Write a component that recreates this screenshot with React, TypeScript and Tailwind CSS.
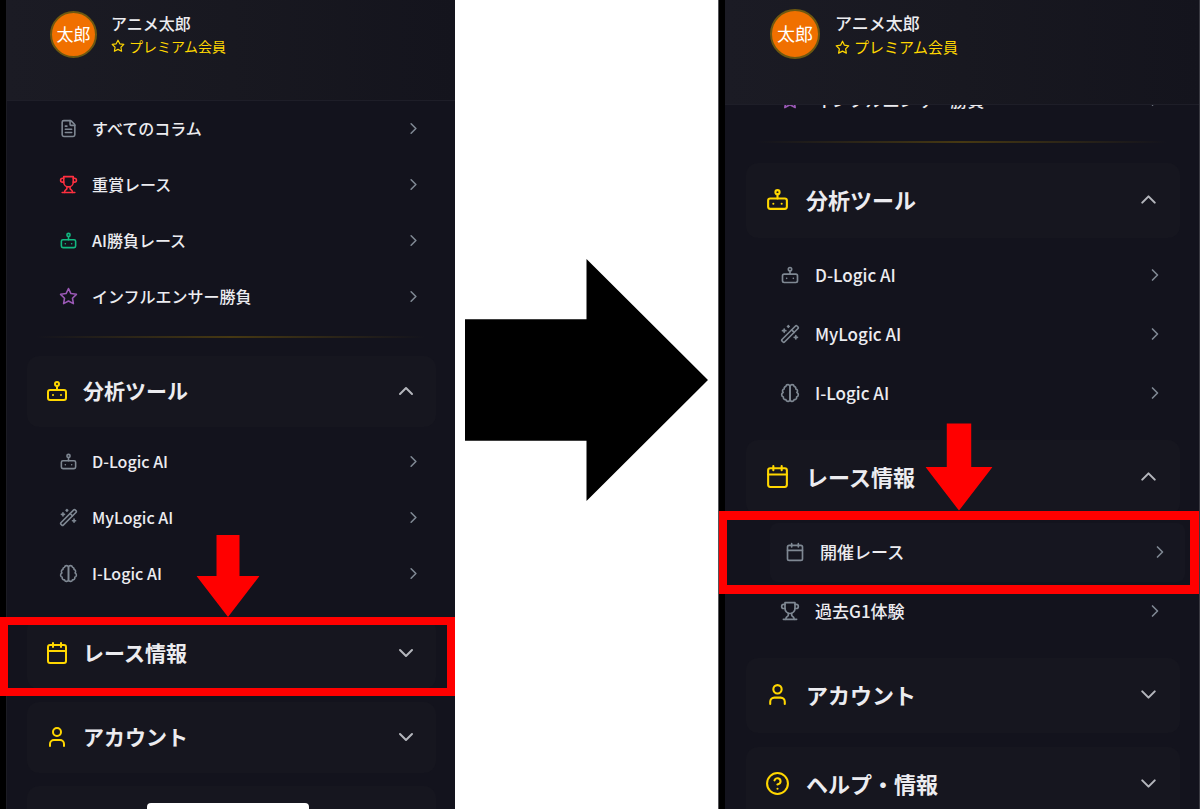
import type { ReactNode } from "react";
import { ChevronDown, ChevronRight, ChevronUp, CircleHelp, FileText, User, WandSparkles } from "lucide-react";
import clsx from "clsx";

type Size = "sm" | "lg";

interface IconProps {
  className?: string;
}

function Svg({ className, children }: IconProps & { children: ReactNode }) {
  return (
    <svg
      viewBox="0 0 24 24"
      fill="none"
      stroke="currentColor"
      strokeWidth="2"
      strokeLinecap="round"
      strokeLinejoin="round"
      className={className}
      aria-hidden="true"
    >
      {children}
    </svg>
  );
}

function BotIcon({ className }: IconProps) {
  return (
    <Svg className={className}>
      <rect width="18" height="10" x="3" y="11" rx="2" />
      <circle cx="12" cy="5" r="2" />
      <path d="M12 7v4M8 16h.01M16 16h.01" />
    </Svg>
  );
}

function BrainIcon({ className }: IconProps) {
  return (
    <Svg className={className}>
      <path d="M9.5 2A2.5 2.5 0 0 1 12 4.5v15a2.5 2.5 0 0 1-4.96.44 2.5 2.5 0 0 1-2.96-3.08 3 3 0 0 1-.34-5.58 2.5 2.5 0 0 1 1.32-4.24 2.5 2.5 0 0 1 1.98-3A2.5 2.5 0 0 1 9.5 2Z" />
      <path d="M14.5 2A2.5 2.5 0 0 0 12 4.5v15a2.5 2.5 0 0 0 4.96.44 2.5 2.5 0 0 0 2.96-3.08 3 3 0 0 0 .34-5.58 2.5 2.5 0 0 0-1.32-4.24 2.5 2.5 0 0 0-1.98-3A2.5 2.5 0 0 0 14.5 2Z" />
    </Svg>
  );
}

function CalendarIcon({ className }: IconProps) {
  return (
    <Svg className={className}>
      <rect width="18" height="18" x="3" y="4" rx="2" />
      <path d="M16 2v4M8 2v4M3 10h18" />
    </Svg>
  );
}

function TrophyIcon({ className }: IconProps) {
  return (
    <Svg className={className}>
      <path d="M6 9H4.5a2.5 2.5 0 0 1 0-5H6M18 9h1.5a2.5 2.5 0 0 0 0-5H18M4 22h16" />
      <path d="M10 14.66V17c0 .55-.47.98-.97 1.21C7.85 18.75 7 20.24 7 22M14 14.66V17c0 .55.47.98.97 1.21C16.15 18.75 17 20.24 17 22" />
      <path d="M18 2H6v7a6 6 0 0 0 12 0V2Z" />
    </Svg>
  );
}

function StarIcon({ className }: IconProps) {
  return (
    <Svg className={className}>
      <polygon points="12 2 15.09 8.26 22 9.27 17 14.14 18.18 21.02 12 17.77 5.82 21.02 7 14.14 2 9.27 8.91 8.26 12 2" />
    </Svg>
  );
}

// Red frame with an arrow pointing down at it
function Callout({ size, className }: { size: Size; className: string }) {
  return (
    <div className={clsx("pointer-events-none absolute right-0 -left-[7px] z-20 border-[#ff0000]", className)}>
      <svg
        viewBox="0 0 63 82"
        className={clsx(
          "absolute left-1/2 -translate-x-1/2 fill-[#ff0000]",
          size === "sm" ? "-top-[90px] h-[82px] w-[63px]" : "-top-[97px] h-[88px] w-[67px]"
        )}
        aria-hidden="true"
      >
        <path d="M20 0h23v41h20L31.500 82 0 41h20z" />
      </svg>
    </div>
  );
}

function Profile({ size }: { size: Size }) {
  const sm = size === "sm";
  return (
    <header
      className={clsx(
        "relative z-10 border-b border-[#1e1e28] bg-linear-to-r from-[#1b1b24] via-[#181820] to-[#14141d]",
        sm ? "h-[101px] pr-7 pl-5" : "h-[105px] pr-[30px] pl-[21px]"
      )}
    >
      <div
        className={clsx(
          "flex items-start rounded-b-xl bg-white/[0.005]",
          sm ? "h-[72px] gap-[14px] pt-[11px] pl-[23px]" : "h-[74px] gap-[15px] pt-[9px] pl-6"
        )}
      >
        <div
          className={clsx(
            "flex shrink-0 items-center justify-center rounded-full border-2 border-[#6d5810] bg-[#f07000] pb-[2px] text-white",
            sm ? "size-[47px] text-[17px]" : "size-[50px] text-[18px]"
          )}
        >
          太郎
        </div>
        <div className={sm ? "" : "pt-[2px]"}>
          <p className={clsx("font-medium text-[#ececf0]", sm ? "text-[16px] leading-6" : "text-[17px] leading-6")}>
            アニメ太郎
          </p>
          <p className={clsx("flex items-center gap-1 text-[#ffd700]", sm ? "text-[14px] leading-[22px]" : "text-[15px] leading-6")}>
            <StarIcon className={sm ? "size-[14px]" : "size-[15px]"} />
            プレミアム会員
          </p>
        </div>
      </div>
    </header>
  );
}

interface RowProps {
  size: Size;
  icon: ReactNode;
  label: string;
  color?: string;
  active?: boolean;
}

function Row({ size, icon, label, color = "text-[#7f8893]", active }: RowProps) {
  const sm = size === "sm";
  return (
    <li className={clsx("relative", sm ? "pr-[18px] pl-[38px]" : active ? "pr-[14px] pl-[45px]" : "pr-[19px] pl-10")}>
      <a
        href="#"
        className={clsx(
          "flex items-center rounded-lg pb-[2px]",
          sm ? "h-14 gap-[14px] px-[14px]" : "h-[59px] gap-[15px] px-[15px]",
          active && "bg-white/[0.015]"
        )}
      >
        <span className={clsx("shrink-0", color, sm ? "[&>svg]:size-[19px]" : "[&>svg]:size-5")}>{icon}</span>
        <span className={clsx("flex-1 font-medium text-[#ececf0]", sm ? "text-[16px]" : "text-[17px]")}>{label}</span>
        <ChevronRight className={clsx("text-[#7f8893]", sm ? "size-[19px]" : "size-5")} />
      </a>
      {active && <Callout size={size} className="-top-[12px] -bottom-[12px] border-[9px]" />}
    </li>
  );
}

interface SectionProps {
  size: Size;
  icon: ReactNode;
  label: string;
  open?: boolean;
  marked?: boolean;
  children?: ReactNode;
}

function Section({ size, icon, label, open, marked, children }: SectionProps) {
  const sm = size === "sm";
  const Chevron = open ? ChevronUp : ChevronDown;
  return (
    <section>
      <div className={clsx("relative", sm ? "pr-[19px] pl-5" : "pr-[19px] pl-[21px]")}>
        <button
          type="button"
          aria-expanded={!!open}
          className={clsx(
            "flex w-full items-center rounded-xl bg-[#16161f] pb-[2px] text-left",
            sm ? "h-[71px] gap-[14px] px-[18px]" : "h-[75px] gap-4 px-[19px]"
          )}
        >
          <span className={clsx("shrink-0 text-[#ffd700]", sm ? "[&>svg]:size-6" : "[&>svg]:size-[25px]")}>{icon}</span>
          <span className={clsx("flex-1 font-bold text-[#ececf0]", sm ? "text-[21px]" : "text-[22px]")}>{label}</span>
          <Chevron className={clsx("text-[#b4b6bc]", sm ? "size-6" : "size-[25px]")} />
        </button>
        {marked && <Callout size={size} className="-top-[1px] -bottom-[7px] border-[8px]" />}
      </div>
      {open && <ul className={sm ? "pt-[7px] pb-[3px]" : "pt-2 pb-[3px]"}>{children}</ul>}
    </section>
  );
}

function Divider({ size }: { size: Size }) {
  return (
    <hr
      className={clsx(
        "h-[2px] border-0 bg-linear-to-r from-transparent via-[#463812] to-transparent",
        size === "sm" ? "mx-[30px] mt-[11px] mb-[18px]" : "mx-[32px] mt-[11px] mb-5"
      )}
    />
  );
}

export default function App() {
  return (
    <main
      lang="ja"
      className="grid h-screen grid-cols-[455fr_263fr_482fr] overflow-hidden bg-white font-['Noto_Sans_CJK_JP',sans-serif]"
    >
      <div className="relative overflow-hidden bg-black pl-[6px]">
        <div className="min-h-full border-l border-[#1c1c24] bg-[#13131d]">
          <Profile size="sm" />
          <ul>
            <Row size="sm" icon={<FileText />} label="すべてのコラム" />
            <Row size="sm" icon={<TrophyIcon />} label="重賞レース" color="text-[#ff3040]" />
            <Row size="sm" icon={<BotIcon />} label="AI勝負レース" color="text-[#12b981]" />
            <Row size="sm" icon={<StarIcon />} label="インフルエンサー勝負" color="text-[#9b59b6]" />
          </ul>
          <Divider size="sm" />
          <div className="flex flex-col gap-[13px]">
            <Section size="sm" icon={<BotIcon />} label="分析ツール" open>
              <Row size="sm" icon={<BotIcon />} label="D-Logic AI" />
              <Row size="sm" icon={<WandSparkles />} label="MyLogic AI" />
              <Row size="sm" icon={<BrainIcon />} label="I-Logic AI" />
            </Section>
            <Section size="sm" icon={<CalendarIcon />} label="レース情報" marked />
            <Section size="sm" icon={<User />} label="アカウント" />
            <div className="mr-[19px] ml-5 h-[71px] rounded-xl bg-[#16161f]" />
          </div>
        </div>
        {/* home indicator */}
        <div className="absolute bottom-0 left-1/2 z-30 h-[6px] w-[162px] -translate-x-1/2 rounded-t bg-white" />
      </div>

      <div className="px-[10px] pt-[259px]">
        <svg viewBox="0 0 242 241" className="w-full fill-black" aria-hidden="true">
          <path d="M0 60h121V0l121 120.500L121 241v-60H0z" />
        </svg>
      </div>

      <div className="relative overflow-hidden border-l border-[#55555a] bg-black pl-[6px]">
        <div className="min-h-full border-r border-[#3a3a42] bg-[#13131d]">
          <Profile size="lg" />
          <ul className="-mt-[34px]">
            <Row size="lg" icon={<StarIcon />} label="インフルエンサー勝負" color="text-[#9b59b6]" />
          </ul>
          <Divider size="lg" />
          <div className="flex flex-col gap-[14px]">
            <Section size="lg" icon={<BotIcon />} label="分析ツール" open>
              <Row size="lg" icon={<BotIcon />} label="D-Logic AI" />
              <Row size="lg" icon={<WandSparkles />} label="MyLogic AI" />
              <Row size="lg" icon={<BrainIcon />} label="I-Logic AI" />
            </Section>
            <Section size="lg" icon={<CalendarIcon />} label="レース情報" open>
              <Row size="lg" icon={<CalendarIcon />} label="開催レース" active />
              <Row size="lg" icon={<TrophyIcon />} label="過去G1体験" />
            </Section>
            <Section size="lg" icon={<User />} label="アカウント" />
            <Section size="lg" icon={<CircleHelp />} label="ヘルプ・情報" />
          </div>
        </div>
      </div>
    </main>
  );
}
